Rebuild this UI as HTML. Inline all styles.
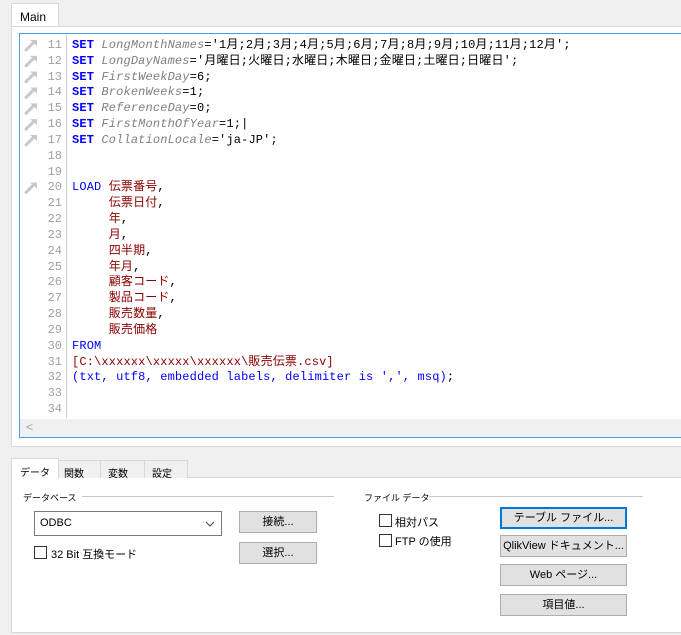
<!DOCTYPE html>
<html><head><meta charset="utf-8"><style>
*{margin:0;padding:0;box-sizing:border-box}
body{width:681px;height:635px;overflow:hidden;background:#f0f0f0;position:relative;font-family:"Liberation Sans","Noto Sans CJK JP",sans-serif;font-size:12px;color:#000}
.abs{position:absolute}
.code{font-family:"Liberation Mono","Noto Sans CJK JP",monospace;font-size:12px;white-space:pre;line-height:15.83px}
.k{color:#0000ff;font-weight:bold}
.i{color:#808080;font-style:italic}
.r{color:#8b0000}
.b{color:#0000ff}
.num{color:#a0a0a0;text-align:right;width:22px}
.btn{position:absolute;background:#e1e1e1;border:1px solid #adadad;text-align:center;font-size:11px;line-height:20px;height:22px}
.cb{position:absolute;width:13px;height:13px;border:1px solid #333;background:#fff}
</style></head><body>
<div class="abs" style="left:11px;top:3px;width:48px;height:24px;background:#fff;border:1px solid #d9d9d9;border-bottom:none;font-size:12px;padding:6px 0 0 8px">Main</div>
<div class="abs" style="left:11px;top:26px;width:690px;height:421px;background:#fff;border:1px solid #d9d9d9"></div>
<div class="abs" style="left:19px;top:33px;width:690px;height:405px;background:#fff;border:1px solid #4a9ee0"></div>
<div class="abs" style="left:66px;top:34px;width:1px;height:384px;background:#d0d0d0"></div>
<div class="abs" style="left:20px;top:419px;width:690px;height:18px;background:#f0f0f0;color:#a0a0a0;font-size:12px;padding:1px 0 0 6px">&lt;</div>
<div class="abs code num" style="left:40px;top:38px;color:#a0a0a0">11
12
13
14
15
16
17
18
19
20
21
22
23
24
25
26
27
28
29
30
31
32
33
34</div>
<svg class="abs" style="left:23px;top:38px" width="16" height="160">
<g stroke="#c8c8c8" stroke-width="3" fill="#c8c8c8" stroke-linecap="round">
<g id="ar"><line x1="3" y1="12" x2="10" y2="5"/><path d="M7 2 L14 2 L14 8Z" stroke="none"/></g>
<use href="#ar" y="15.83"/><use href="#ar" y="31.66"/><use href="#ar" y="47.49"/><use href="#ar" y="63.32"/><use href="#ar" y="79.15"/><use href="#ar" y="94.98"/><use href="#ar" y="142.47"/>
</g></svg>
<div class="abs code" style="left:72px;top:38px;letter-spacing:0.15px"><span class="k">SET</span> <span class="i">LongMonthNames</span>='1月;2月;3月;4月;5月;6月;7月;8月;9月;10月;11月;12月';
<span class="k">SET</span> <span class="i">LongDayNames</span>='月曜日;火曜日;水曜日;木曜日;金曜日;土曜日;日曜日';
<span class="k">SET</span> <span class="i">FirstWeekDay</span>=6;
<span class="k">SET</span> <span class="i">BrokenWeeks</span>=1;
<span class="k">SET</span> <span class="i">ReferenceDay</span>=0;
<span class="k">SET</span> <span class="i">FirstMonthOfYear</span>=1;|
<span class="k">SET</span> <span class="i">CollationLocale</span>='ja-JP';


<span class="b">LOAD</span> <span class="r">伝票番号</span>,
     <span class="r">伝票日付</span>,
     <span class="r">年</span>,
     <span class="r">月</span>,
     <span class="r">四半期</span>,
     <span class="r">年月</span>,
     <span class="r">顧客コード</span>,
     <span class="r">製品コード</span>,
     <span class="r">販売数量</span>,
     <span class="r">販売価格</span>
<span class="b">FROM</span>
<span class="r">[C:\xxxxxx\xxxxx\xxxxxx\販売伝票.csv]</span>
<span class="b">(txt, utf8, embedded labels, delimiter is ',', msq)</span>;</div>
<div class="abs" style="left:11px;top:477px;width:690px;height:156px;background:#fff;border:1px solid #d9d9d9"></div>
<div class="abs" style="left:11px;top:458px;width:48px;height:21px;background:#fff;border:1px solid #d9d9d9;border-bottom:none;font-size:10px;padding:5px 0 0 8px">データ</div>
<div class="abs" style="left:58px;top:460px;width:43px;height:18px;background:#f0f0f0;border:1px solid #d9d9d9;border-bottom:none;font-size:10px;padding:4px 0 0 5px">関数</div>
<div class="abs" style="left:100px;top:460px;width:45px;height:18px;background:#f0f0f0;border:1px solid #d9d9d9;border-bottom:none;font-size:10px;padding:4px 0 0 7px">変数</div>
<div class="abs" style="left:144px;top:460px;width:44px;height:18px;background:#f0f0f0;border:1px solid #d9d9d9;border-bottom:none;font-size:10px;padding:4px 0 0 7px">設定</div>
<div class="abs" style="left:23px;top:491px;font-size:9px">データベース</div>
<div class="abs" style="left:82px;top:496px;width:252px;height:1px;background:#c8c8c8"></div>
<div class="abs" style="left:34px;top:511px;width:188px;height:25px;background:#fff;border:1px solid #7a7a7a;padding:5px 0 0 5px;font-size:11px">ODBC<svg style="position:absolute;right:6px;top:9px" width="10" height="6"><path d="M1 1 L5 5 L9 1" stroke="#444" fill="none"/></svg></div>
<div class="btn" style="left:239px;top:511px;width:78px">接続...</div>
<div class="btn" style="left:239px;top:542px;width:78px">選択...</div>
<div class="cb" style="left:34px;top:546px"></div>
<div class="abs" style="left:51px;top:546px;font-size:11px">32 Bit 互換モード</div>
<div class="abs" style="left:364px;top:491px;font-size:9px">ファイル データ</div>
<div class="abs" style="left:429px;top:496px;width:214px;height:1px;background:#c8c8c8"></div>
<div class="cb" style="left:379px;top:514px"></div>
<div class="abs" style="left:395px;top:514px;font-size:11px">相対パス</div>
<div class="cb" style="left:379px;top:534px"></div>
<div class="abs" style="left:395px;top:533px;font-size:11px">FTP の使用</div>
<div class="btn" style="left:500px;top:507px;width:127px;border:2px solid #0078d7;line-height:18px">テーブル ファイル...</div>
<div class="btn" style="left:500px;top:535px;width:127px">QlikView ドキュメント...</div>
<div class="btn" style="left:500px;top:564px;width:127px">Web ページ...</div>
<div class="btn" style="left:500px;top:594px;width:127px">項目値...</div>
</body></html>
